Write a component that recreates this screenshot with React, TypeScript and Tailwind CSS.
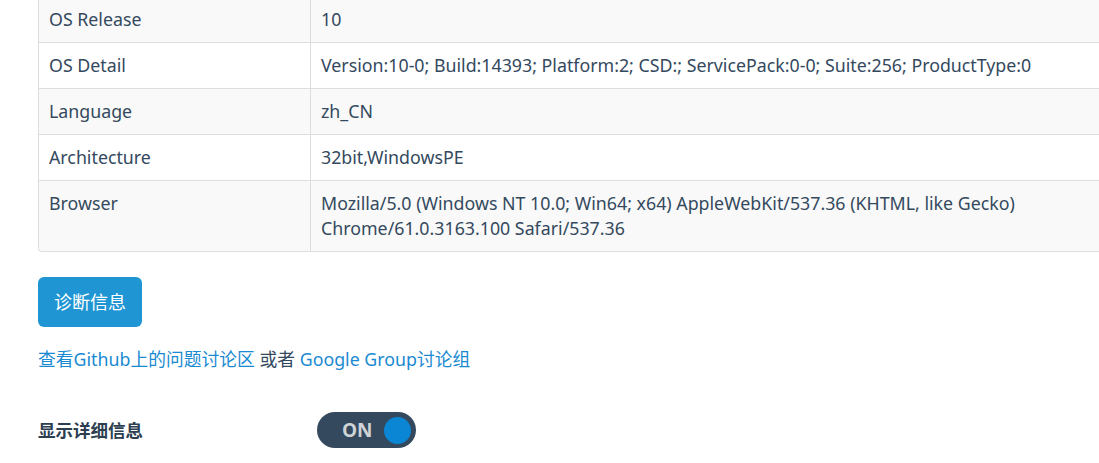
import React, { useState } from "react";

type Row = { label: string; value: React.ReactNode };

const rows: Row[] = [
  { label: "OS Release", value: "10" },
  {
    label: "OS Detail",
    value:
      "Version:10-0; Build:14393; Platform:2; CSD:; ServicePack:0-0; Suite:256; ProductType:0",
  },
  { label: "Language", value: "zh_CN" },
  { label: "Architecture", value: "32bit,WindowsPE" },
  {
    label: "Browser",
    value: (
      <>
        Mozilla/5.0 (Windows NT 10.0; Win64; x64) AppleWebKit/537.36 (KHTML, like Gecko)
        <br />
        Chrome/61.0.3163.100 Safari/537.36
      </>
    ),
  },
];

const font = "font-['Noto_Sans','Noto_Sans_CJK_SC',sans-serif]";

const App = () => {
  const [detail, setDetail] = useState(true);

  return (
    <div className={`w-full h-[463px] overflow-hidden bg-white text-[#34495e] ${font}`}>
      <div className="pl-[38px] -mt-[3px]">
        <table className="w-[1090px] border-separate border-spacing-0 border-l border-b border-[#dddddd] rounded-bl-[4px] text-[17.8px] leading-[25px]">
          <tbody>
            {rows.map((row, i) => (
              <tr key={row.label} className={i % 2 === 0 ? "bg-[#f9f9f9]" : "bg-white"}>
                <td
                  className={`w-[272px] px-[10px] py-[10px] align-top border-r border-[#dddddd] ${
                    i > 0 ? "border-t" : ""
                  } ${i === rows.length - 1 ? "rounded-bl-[4px]" : ""}`}
                >
                  {row.label}
                </td>
                <td className={`px-[10px] py-[10px] align-top border-[#dddddd] ${i > 0 ? "border-t" : ""}`}>
                  {row.value}
                </td>
              </tr>
            ))}
          </tbody>
        </table>

        <button className="mt-[25px] h-[50px] px-[16px] rounded-[6px] bg-[#1f95d3] text-white text-[18px]">
          诊断信息
        </button>

        <p className="mt-[20px] text-[17.8px] leading-[25px]">
          <a className="text-[#1a8ad2]">查看Github上的问题讨论区</a> 或者{" "}
          <a className="text-[#1a8ad2]">Google Group讨论组</a>
        </p>

        <div className="mt-[40px] flex items-center">
          <span className="w-[279px] text-[17.5px] font-bold text-[#2c3e50]">显示详细信息</span>
          <button
            onClick={() => setDetail(!detail)}
            className="w-[99px] h-[36px] rounded-full bg-[#34495e] flex items-center justify-between pl-[25px] pr-[5px]"
          >
            <span className="text-[19px] font-bold text-[#cfd3d6] font-['Open_Sans',sans-serif]">
              {detail ? "ON" : "OFF"}
            </span>
            <span className="w-[27px] h-[27px] rounded-full bg-[#0a86d4]" />
          </button>
        </div>
      </div>
    </div>
  );
};

export default App;
